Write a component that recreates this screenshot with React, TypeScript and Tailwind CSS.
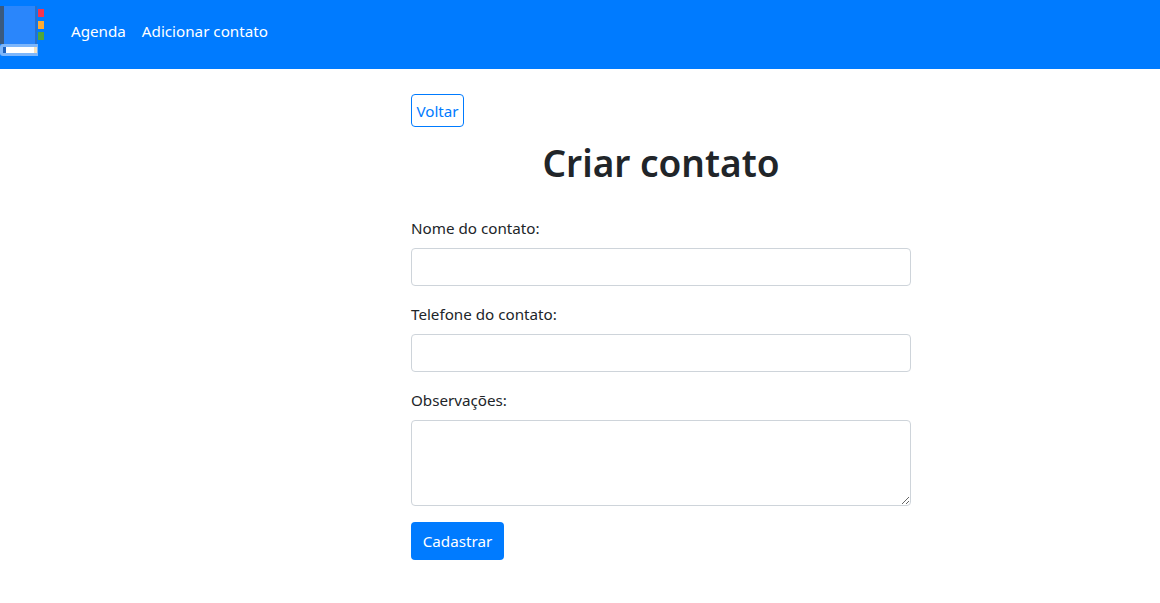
export default function App() {
  return (
    <div className="min-h-screen bg-white font-['Noto_Sans','Open_Sans',sans-serif] text-[15.2px] leading-6 text-[#212529]">
      {/* Navbar */}
      <nav className="flex h-[69px] items-center bg-[#007bff]">
        <svg width="44" height="56" viewBox="0 0 44 56" className="mb-[13px] shrink-0 self-end">
          <rect x="0" y="6" width="5" height="38" fill="#3a5a80" />
          <rect x="4" y="6" width="31" height="38" fill="#2a86fb" />
          <rect x="35" y="6" width="2" height="38" fill="#2b6fc9" />
          <rect x="38" y="9" width="6" height="8" fill="#f5334f" />
          <rect x="38" y="21" width="6" height="8" fill="#fdab33" />
          <rect x="38" y="32" width="6" height="8" fill="#4ea63e" />
          <path d="M3 44h35v12H3a3 3 0 0 1-3-3v-6a3 3 0 0 1 3-3z" fill="#7db6fb" />
          <rect x="3" y="47" width="4" height="6" fill="#1d62c0" />
          <rect x="6" y="47" width="28" height="6" fill="#ffffff" />
          <rect x="34" y="47" width="3" height="6" fill="#f6e2c0" />
        </svg>
        <div className="ml-[27px] flex gap-4 pb-[7px] text-white">
          <a>Agenda</a>
          <a>Adicionar contato</a>
        </div>
      </nav>

      {/* Form */}
      <main className="ml-[411px] w-[500px] pt-[25px]">
        <a className="block h-[33px] w-[53px] rounded border border-[#007bff] text-center leading-[33px] text-[#007bff]">Voltar</a>
        <h1 className="mt-[12px] mb-[29px] text-center text-[37px] leading-[48px] font-semibold">Criar contato</h1>

        <div className="mb-4">
          <label className="mb-2 block">Nome do contato:</label>
          <input className="block h-[38px] w-full rounded border border-[#ced4da] bg-white" />
        </div>
        <div className="mb-4">
          <label className="mb-2 block">Telefone do contato:</label>
          <input className="block h-[38px] w-full rounded border border-[#ced4da] bg-white" />
        </div>
        <div className="mb-4">
          <label className="mb-2 block">Observações:</label>
          <textarea className="block h-[86px] w-full rounded border border-[#ced4da] bg-white" />
        </div>
        <button className="h-[38px] w-[93px] rounded bg-[#007bff] text-white">Cadastrar</button>
      </main>
    </div>
  );
}
